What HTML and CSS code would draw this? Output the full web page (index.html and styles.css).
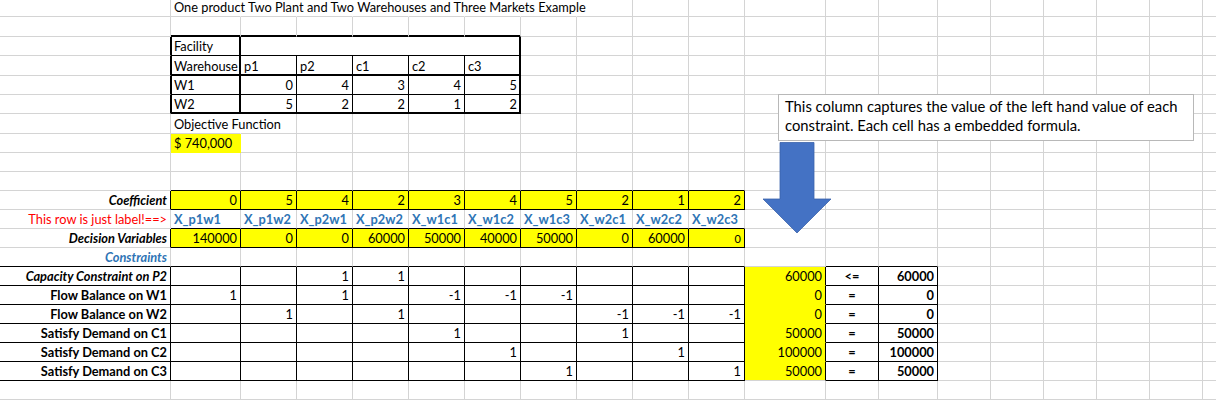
FILE: index.html
```html
<!DOCTYPE html>
<html>
<head>
<meta charset="utf-8">
<link rel="stylesheet" href="styles.css">
</head>
<body>
<div class="sheet">
<table class="grid">
<colgroup>
<col class="cA"><col class="cB"><col class="c56"><col class="c56"><col class="c56"><col class="c56"><col class="c56"><col class="c56"><col class="c56"><col class="c56"><col class="c56"><col class="cL"><col class="c53"><col class="cN"><col class="c53"><col class="c53"><col class="c53"><col class="c53"><col class="c53"><col class="cT">
</colgroup>
<tr class="r16"><td></td><td class="N">One product Two Plant and Two Warehouses and Three Markets Example</td><td class="N"></td><td class="N"></td><td class="N"></td><td class="N"></td><td class="N"></td><td class="N"></td><td></td><td></td><td></td><td></td><td></td><td></td><td></td><td></td><td></td><td></td><td></td><td></td><td></td></tr>
<tr class="r20"><td></td><td class="B sb"></td><td class="B sb"></td><td class="B sb"></td><td class="B sb"></td><td class="B sb"></td><td class="B sb"></td><td></td><td></td><td></td><td></td><td></td><td></td><td></td><td></td><td></td><td></td><td></td><td></td><td></td></tr>
<tr><td class="R"></td><td class="R B sl sr">Facility</td><td colspan="5" class="R B sr"></td><td></td><td></td><td></td><td></td><td></td><td></td><td></td><td></td><td></td><td></td><td></td><td></td><td></td></tr>
<tr class="r20"><td class="R"></td><td class="R B sl sr sb">Warehouse</td><td class="R B sb">p1</td><td class="R B sb">p2</td><td class="R B sb">c1</td><td class="R B sb">c2</td><td class="R B sb sr">c3</td><td></td><td></td><td></td><td></td><td></td><td></td><td></td><td></td><td></td><td></td><td></td><td></td><td></td></tr>
<tr><td class="R"></td><td class="R B sl sr">W1</td><td class="R B num">0</td><td class="R B num">4</td><td class="R B num">3</td><td class="R B num">4</td><td class="R B num sr">5</td><td></td><td></td><td></td><td></td><td></td><td></td><td></td><td></td><td></td><td></td><td></td><td></td><td></td></tr>
<tr><td class="R"></td><td class="R B sl sr sb">W2</td><td class="R B num sb">5</td><td class="R B num sb">2</td><td class="R B num sb">2</td><td class="R B num sb">1</td><td class="R B num sr sb">2</td><td></td><td></td><td></td><td></td><td></td><td></td><td></td><td></td><td></td><td></td><td></td><td></td><td></td></tr>
<tr class="r20"><td></td><td class="N">Objective Function</td><td></td><td></td><td></td><td></td><td></td><td></td><td></td><td></td><td></td><td></td><td></td><td></td><td></td><td></td><td></td><td></td><td></td><td></td></tr>
<tr><td></td><td class="y money">$ 740,000</td><td></td><td></td><td></td><td></td><td></td><td></td><td></td><td></td><td></td><td></td><td></td><td></td><td></td><td></td><td></td><td></td><td></td><td></td></tr>
<tr><td></td><td></td><td></td><td></td><td></td><td></td><td></td><td></td><td></td><td></td><td></td><td></td><td></td><td></td><td></td><td></td><td></td><td></td><td></td><td></td></tr>
<tr><td></td><td class="B"></td><td class="B"></td><td class="B"></td><td class="B"></td><td class="B"></td><td class="B"></td><td class="B"></td><td class="B"></td><td class="B"></td><td class="B"></td><td></td><td></td><td></td><td></td><td></td><td></td><td></td><td></td><td></td></tr>
<tr><td class="R lbl it">Coefficient</td><td class="y R B num">0</td><td class="y R B num">5</td><td class="y R B num">4</td><td class="y R B num">2</td><td class="y R B num">3</td><td class="y R B num">4</td><td class="y R B num">5</td><td class="y R B num">2</td><td class="y R B num">1</td><td class="y R B num">2</td><td></td><td></td><td></td><td></td><td></td><td></td><td></td><td></td><td></td></tr>
<tr><td class="red rt">This row is just label!==&gt;</td><td class="B var">X_p1w1</td><td class="B var">X_p1w2</td><td class="B var">X_p2w1</td><td class="B var">X_p2w2</td><td class="B var">X_w1c1</td><td class="B var">X_w1c2</td><td class="B var">X_w1c3</td><td class="B var">X_w2c1</td><td class="B var">X_w2c2</td><td class="B var">X_w2c3</td><td></td><td></td><td></td><td></td><td></td><td></td><td></td><td></td><td></td></tr>
<tr><td class="R lbl it">Decision Variables</td><td class="y R B num">140000</td><td class="y R B num">0</td><td class="y R B num">0</td><td class="y R B num">60000</td><td class="y R B num">50000</td><td class="y R B num">40000</td><td class="y R B num">50000</td><td class="y R B num">0</td><td class="y R B num">60000</td><td class="y R B num small">0</td><td></td><td></td><td></td><td></td><td></td><td></td><td></td><td></td><td></td></tr>
<tr><td class="B lbl it blue">Constraints</td><td class="B"></td><td class="B"></td><td class="B"></td><td class="B"></td><td class="B"></td><td class="B"></td><td class="B"></td><td class="B"></td><td class="B"></td><td class="B"></td><td></td><td class="B"></td><td class="B"></td><td></td><td></td><td></td><td></td><td></td><td></td></tr>
<tr><td class="R B lbl it">Capacity Constraint on P2</td><td class="R B"></td><td class="R B"></td><td class="R B num">1</td><td class="R B num">1</td><td class="R B"></td><td class="R B"></td><td class="R B"></td><td class="R B"></td><td class="R B"></td><td class="R B"></td><td class="y R num">60000</td><td class="R B ctr bold">&lt;=</td><td class="R B num bold">60000</td><td></td><td></td><td></td><td></td><td></td><td></td></tr>
<tr><td class="R B lbl">Flow Balance on W1</td><td class="R B num">1</td><td class="R B"></td><td class="R B num">1</td><td class="R B"></td><td class="R B num">-1</td><td class="R B num">-1</td><td class="R B num">-1</td><td class="R B"></td><td class="R B"></td><td class="R B"></td><td class="y R num">0</td><td class="R B ctr bold">=</td><td class="R B num bold">0</td><td></td><td></td><td></td><td></td><td></td><td></td></tr>
<tr><td class="R B lbl">Flow Balance on W2</td><td class="R B"></td><td class="R B num">1</td><td class="R B"></td><td class="R B num">1</td><td class="R B"></td><td class="R B"></td><td class="R B"></td><td class="R B num">-1</td><td class="R B num">-1</td><td class="R B num">-1</td><td class="y R num">0</td><td class="R B ctr bold">=</td><td class="R B num bold">0</td><td></td><td></td><td></td><td></td><td></td><td></td></tr>
<tr><td class="R B lbl">Satisfy Demand on C1</td><td class="R B"></td><td class="R B"></td><td class="R B"></td><td class="R B"></td><td class="R B num">1</td><td class="R B"></td><td class="R B"></td><td class="R B num">1</td><td class="R B"></td><td class="R B"></td><td class="y R num">50000</td><td class="R B ctr bold">=</td><td class="R B num bold">50000</td><td></td><td></td><td></td><td></td><td></td><td></td></tr>
<tr><td class="R B lbl">Satisfy Demand on C2</td><td class="R B"></td><td class="R B"></td><td class="R B"></td><td class="R B"></td><td class="R B"></td><td class="R B num">1</td><td class="R B"></td><td class="R B"></td><td class="R B num">1</td><td class="R B"></td><td class="y R num">100000</td><td class="R B ctr bold">=</td><td class="R B num bold">100000</td><td></td><td></td><td></td><td></td><td></td><td></td></tr>
<tr><td class="R B lbl">Satisfy Demand on C3</td><td class="R B"></td><td class="R B"></td><td class="R B"></td><td class="R B"></td><td class="R B"></td><td class="R B"></td><td class="R B num">1</td><td class="R B"></td><td class="R B"></td><td class="R B num">1</td><td class="y R g num">50000</td><td class="R B ctr bold">=</td><td class="R B num bold">50000</td><td></td><td></td><td></td><td></td><td></td><td></td></tr>
<tr><td></td><td></td><td></td><td></td><td></td><td></td><td></td><td></td><td></td><td></td><td></td><td></td><td></td><td></td><td></td><td></td><td></td><td></td><td></td><td></td></tr>
<tr><td></td><td></td><td></td><td></td><td></td><td></td><td></td><td></td><td></td><td></td><td></td><td></td><td></td><td></td><td></td><td></td><td></td><td></td><td></td><td></td></tr>
</table>
<div class="note">This column captures the value of the left hand value of each constraint. Each cell has a embedded formula.</div>
<svg class="arrow" width="70" height="92" viewBox="0 0 70 92"><polygon points="18,0.5 52,0.5 52,57 69,57 35,91 1,57 18,57" fill="#4472c4" stroke="#3a62ab" stroke-width="0.8"/></svg>
</div>
</body>
</html>
```
FILE: styles.css
```css
html, body {
  margin: 0;
  padding: 0;
  overflow: hidden;
  background: #fff;
}
.sheet {
  position: relative;
  width: 1216px;
  height: 400px;
  overflow: hidden;
  font-family: Lato, "Liberation Sans", sans-serif;
  font-size: 12.8px;
  color: #000;
}
.grid {
  border-collapse: separate;
  border-spacing: 0;
  table-layout: fixed;
  width: 1217px;
}
.cA { width: 171px; }
.cB { width: 70px; }
.c56 { width: 56px; }
.cL { width: 81px; }
.c53 { width: 53px; }
.cN { width: 59px; }
.cT { width: 14px; }
.grid tr { height: 19px; }
.grid tr.r16 { height: 16px; }
.grid tr.r20 { height: 20px; }
.grid td {
  box-sizing: border-box;
  border-right: 1px solid #d4d4d4;
  border-bottom: 1px solid #d4d4d4;
  padding: 0 3px 1px 3px;
  white-space: nowrap;
  overflow: visible;
  vertical-align: bottom;
  line-height: 15px;
  box-shadow: var(--sl, 0 0 0 transparent), var(--sr, 0 0 0 transparent), var(--sb, 0 0 0 transparent);
}
.grid td.y {
  background: #ffff00;
  border-right-color: transparent;
  border-bottom-color: transparent;
}
.grid td.N { border-right-color: transparent; }
.grid td.R { border-right-color: #000; }
.grid td.B { border-bottom-color: #000; }
.grid td.g { border-bottom-color: #d4d4d4; }
.sl { --sl: inset 1px 0 0 #000; }
.sr { --sr: inset -1px 0 0 #000; }
.sb { --sb: inset 0 -1px 0 #000; }
.num { text-align: right; }
.ctr { text-align: center; }
.bold { font-weight: bold; }
.lbl { text-align: right; font-weight: bold; padding-right: 4px; }
.rt { text-align: right; }
.it { font-style: italic; }
.blue { color: #2e74b5; }
.red { color: #ff0000; }
.var { color: #2e74b5; font-weight: bold; }
.small { font-size: 11px; }
.money { padding-left: 6px; }
.note {
  position: absolute;
  left: 778px;
  top: 94px;
  width: 416px;
  height: 47px;
  box-sizing: border-box;
  border: 1px solid #b8b8b8;
  background: #fff;
  padding: 2px 6px 0;
  font-size: 14.8px;
  line-height: 19px;
}
.arrow {
  position: absolute;
  left: 762px;
  top: 142px;
}
```
